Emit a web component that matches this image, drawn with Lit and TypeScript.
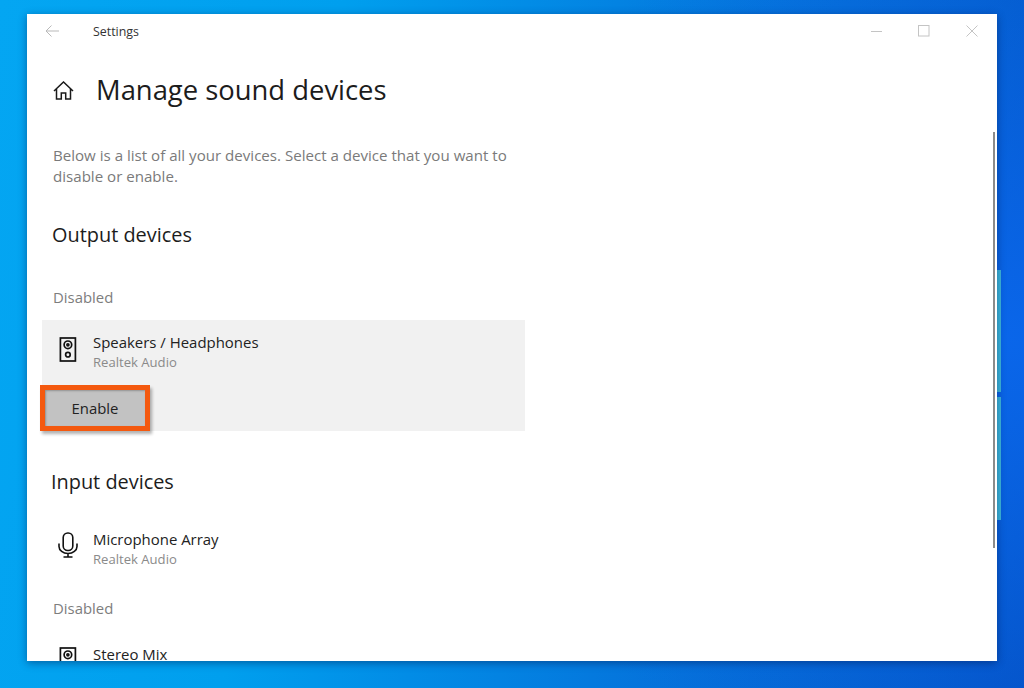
import { LitElement, html, css } from "lit";
import { customElement } from "lit/decorators.js";

const speaker = html`<svg width="18" height="25" viewBox="0 0 18 25" fill="none" stroke="#111" stroke-width="1.7">
  <rect x="1.4" y="1" width="15" height="23"/><circle cx="8.9" cy="7.8" r="3.8"/><circle cx="8.9" cy="7.8" r="1"/><circle cx="8.9" cy="17.7" r="2.3"/></svg>`;
const mic = html`<svg width="20" height="26" viewBox="0 0 20 26" fill="none" stroke="#111" stroke-width="1.6">
  <rect x="5.2" y="1" width="9.6" height="17.5" rx="4.6"/><path d="M1 11.5v3a9 7 0 0 0 18 0v-3M10 21.5V25M5.5 25h9"/></svg>`;

@customElement("app-root")
export class AppRoot extends LitElement {
  static styles = css`
    :host { display: block; width: 1024px; height: 688px; overflow: hidden; position: relative;
      font-family: "Open Sans", "Noto Sans", sans-serif; color: #1a1a1a;
      background:
        radial-gradient(ellipse 620px 420px at 1000px 340px, #0a66ea 0%, rgba(10,102,234,0) 100%),
        linear-gradient(100deg, #04a6f2 0%, #009fee 30%, #0570da 70%, #0452c6 100%); }
    .sliver { position: absolute; left: 997px; width: 4px; background: #3cb8dc; }
    .s1 { top: 270px; height: 122px; } .s2 { top: 397px; height: 123px; }
    .window { position: absolute; left: 27px; top: 14px; width: 970px; height: 647px; background: #fff;
      overflow: hidden; box-shadow: 0 2px 8px rgba(0,20,70,.45); }
    .titlebar { height: 34px; display: flex; align-items: center; padding: 0 19px 0 18px; }
    .back { display: block; margin-right: 34px; }
    .appname { font-size: 12.4px; color: #333; flex: 1; margin-top: 1px; }
    .controls { display: flex; gap: 36px; align-items: center; }
    .content { padding: 0 0 0 25px; }
    .head { display: flex; align-items: center; gap: 22px; height: 50px; margin-top: 17px; }
    h1 { font-weight: 400; font-size: 27.4px; margin: 0; color: #1c1c1c; line-height: 50px; }
    .home { margin-left: 1px; }
    .intro { margin: 30px 0 0 1px; width: 480px; font-size: 15.1px; line-height: 21px; color: #7a7a7a; }
    h2 { font-weight: 400; font-size: 19.9px; margin: 0; line-height: 28px; color: #1c1c1c; }
    .out { margin-top: 34px; }
    .in { margin-top: 37px; margin-left: -1px; }
    .label { font-size: 14.9px; line-height: 20px; color: #7d7d7d; margin: 0 0 0 1px; }
    .l1 { margin-top: 38px; } .l2 { margin-top: 29px; }
    .card { width: 483px; height: 111px; background: #f1f1f1; margin: 13px 0 0 -10px; }
    .row { display: flex; align-items: flex-start; }
    .ico { width: 51px; display: flex; justify-content: center; flex: none; }
    .name { font-size: 14.95px; line-height: 20px; color: #222; margin-bottom: 1px; }
    .sub { font-size: 13.1px; line-height: 19px; color: #8a8a8a; }
    .card .row { padding-top: 12px; }
    .card .ico { padding-top: 5px; }
    .btnwrap { position: relative; }
    .enable { position: absolute; left: -2px; top: 13px; width: 110px; height: 46px; box-sizing: border-box;
      border: 5px solid #f4590f; background: #c2c2c2; font: inherit; font-size: 14.9px; color: #222; padding: 0 0 1px;
      box-shadow: 2px 3px 3px rgba(0,0,0,.3), inset 1px 1px 2px rgba(0,0,0,.25); }
    .mic { margin: 33px 0 0 -10px; }
    .mic .ico { padding-top: 3px; }
    .stereo { margin: 26px 0 0 -10px; }
    .stereo .ico { padding-top: 3px; }
    .scroll { position: absolute; right: 2px; top: 118px; width: 2px; height: 416px; background: #8c8c8c; }
  `;
  render() {
    return html`
      <div class="sliver s1"></div><div class="sliver s2"></div>
      <div class="window">
        <div class="titlebar">
          <svg class="back" width="14" height="12" viewBox="0 0 14 12" fill="none" stroke="#b9b9b9" stroke-width="1"><path d="M14 6H1M6.5 .5 1 6l5.5 5.5"/></svg>
          <span class="appname">Settings</span>
          <div class="controls">
            <svg width="12" height="12" viewBox="0 0 12 12" stroke="#c4c4c4" fill="none"><path d="M1 6.5h11"/></svg>
            <svg width="12" height="12" viewBox="0 0 12 12" stroke="#c4c4c4" fill="none"><rect x=".5" y=".5" width="10.5" height="10.5"/></svg>
            <svg width="12" height="12" viewBox="0 0 12 12" stroke="#c4c4c4" fill="none"><path d="M.5 .5l11 11M11.5 .5l-11 11"/></svg>
          </div>
        </div>
        <div class="content">
          <div class="head">
            <svg class="home" width="21" height="19" viewBox="0 0 21 19" fill="none" stroke="#1a1a1a" stroke-width="1.5"><path d="M1 10 10.5 1 20 10M3.5 8v10h4.8v-6h4.4v6h4.8V8"/></svg>
            <h1>Manage sound devices</h1>
          </div>
          <p class="intro">Below is a list of all your devices. Select a device that you want to disable or enable.</p>
          <h2 class="out">Output devices</h2>
          <p class="label l1">Disabled</p>
          <div class="card">
            <div class="row"><div class="ico">${speaker}</div>
              <div><div class="name">Speakers / Headphones</div><div class="sub">Realtek Audio</div></div></div>
            <div class="btnwrap"><button class="enable">Enable</button></div>
          </div>
          <h2 class="in">Input devices</h2>
          <div class="row mic"><div class="ico">${mic}</div>
            <div><div class="name">Microphone Array</div><div class="sub">Realtek Audio</div></div></div>
          <p class="label l2">Disabled</p>
          <div class="row stereo"><div class="ico">${speaker}</div>
            <div><div class="name">Stereo Mix</div></div></div>
        </div>
        <div class="scroll"></div>
      </div>`;
  }
}
